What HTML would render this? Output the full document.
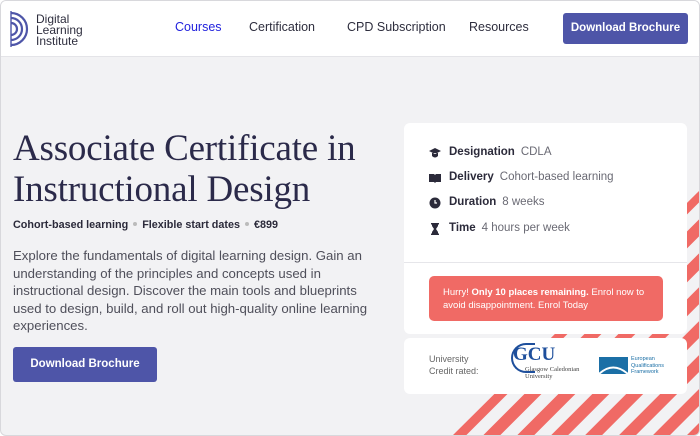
<!DOCTYPE html>
<html><head><meta charset="utf-8"><style>
*{margin:0;padding:0;box-sizing:border-box}
body{width:700px;height:436px;overflow:hidden;font-family:"Liberation Sans",sans-serif;background:#fff}
.page{position:absolute;left:0;top:0;width:700px;height:436px;border:1px solid #d8d8dc;border-radius:6px;overflow:hidden;background:#f2f2f4}
.hdr{position:absolute;left:0;top:0;width:700px;height:56px;background:#fff;border-bottom:1px solid #e4e4e8}
.nav{position:absolute;top:19px;font-size:12.5px;color:#2e2e3e}
.btn{position:absolute;background:#4e55a8;color:#fff;font-size:11.5px;font-weight:bold;text-align:center;border-radius:3px}
h1{position:absolute;left:12px;top:127px;font-family:"Liberation Serif",serif;font-weight:normal;font-size:37px;line-height:41px;color:#2b2a4a;letter-spacing:-0.2px}
.meta{position:absolute;left:12px;top:218px;font-size:10.8px;font-weight:bold;color:#2b2a3a}
.meta i{display:inline-block;width:4px;height:4px;border-radius:50%;background:#bbb;margin:0 5px 2px}
.desc{position:absolute;left:12px;top:246px;width:365px;font-size:13.2px;line-height:17.5px;color:#4f4f5a}
.card{position:absolute;background:#fff;border-radius:6px}
.row{position:absolute;left:25px;font-size:11.5px;color:#6a6a74}
.row b{color:#2b2a3a;margin-right:6px}
.row svg{position:absolute;left:0;top:1px}
.row span{margin-left:20px}
</style></head><body><div class="page">
<svg style="position:absolute;left:0;top:0" width="700" height="436">
<defs><clipPath id="c"><polygon points="700,188 700,436 450,436"/></clipPath>
<pattern id="p" width="24" height="24" patternUnits="userSpaceOnUse" patternTransform="rotate(45)"><rect width="12" height="24" fill="#f06a65"/></pattern></defs>
<rect x="0" y="0" width="700" height="436" fill="url(#p)" clip-path="url(#c)"/>
</svg>
<div class="hdr">
<svg style="position:absolute;left:8px;top:9px" width="26" height="38" viewBox="0 0 26 38" fill="none" stroke="#4e55a8" stroke-width="2.2">
<path d="M2 3a16 16 0 0 1 0 32"/><path d="M2 8a11 11 0 0 1 0 22"/><path d="M2 13a6 6 0 0 1 0 12"/><path d="M2 1v36" stroke-width="1.4"/></svg>
<div style="position:absolute;left:35px;top:13px;font-size:12px;line-height:11px;color:#2e2e3e">Digital<br>Learning<br>Institute</div>
<div class="nav" style="left:174px;color:#2222dd">Courses</div>
<div class="nav" style="left:248px">Certification</div>
<div class="nav" style="left:346px">CPD Subscription</div>
<div class="nav" style="left:468px">Resources</div>
<div class="btn" style="left:562px;top:12px;width:125px;height:31px;line-height:31px">Download Brochure</div>
</div>
<h1>Associate Certificate in<br>Instructional Design</h1>
<div class="meta">Cohort-based learning<i></i>Flexible start dates<i></i>€899</div>
<div class="desc">Explore the fundamentals of digital learning design. Gain an understanding of the principles and concepts used in instructional design. Discover the main tools and blueprints used to design, build, and roll out high-quality online learning experiences.</div>
<div class="btn" style="left:12px;top:346px;width:144px;height:35px;line-height:35px">Download Brochure</div>
<div class="card" style="left:403px;top:122px;width:283px;height:211px">
<div class="row" style="top:23px"><svg width="12" height="12" viewBox="0 0 12 12"><path d="M0 4l6-3 6 3-6 3z M3 6v3c2 2 4 2 6 0V6" fill="#2b2a3a"/></svg><span><b>Designation</b>CDLA</span></div>
<div class="row" style="top:48px"><svg width="12" height="12" viewBox="0 0 12 12"><path d="M0 2h5l1 1 1-1h5v8H7l-1 1-1-1H0z" fill="#2b2a3a"/></svg><span><b>Delivery</b>Cohort-based learning</span></div>
<div class="row" style="top:73px"><svg width="12" height="12" viewBox="0 0 12 12"><circle cx="6" cy="6" r="5.5" fill="#2b2a3a"/><path d="M6 3v3h2" stroke="#fff" stroke-width="1.2" fill="none"/></svg><span><b>Duration</b>8 weeks</span></div>
<div class="row" style="top:99px"><svg width="12" height="12" viewBox="0 0 12 12"><path d="M2 0h8v1.5H9v1.5L7 6l2 3v1.5h1V12H2v-1.5h1V9l2-3-2-3V1.5H2z" fill="#2b2a3a"/></svg><span><b>Time</b>4 hours per week</span></div>
<div style="position:absolute;left:0;top:139px;width:283px;height:1px;background:#e6e6ea"></div>
<div style="position:absolute;left:25px;top:153px;width:234px;height:45px;background:#f06a65;border-radius:5px;color:#fff;font-size:9.5px;line-height:13px;padding:10px 14px">Hurry! <b>Only 10 places remaining.</b> Enrol now to avoid disappointment. Enrol Today</div>
</div>
<div class="card" style="left:403px;top:337px;width:283px;height:56px">
<div style="position:absolute;left:25px;top:15px;font-size:9px;line-height:12px;color:#666">University<br>Credit rated:</div>
<div style="position:absolute;left:109px;top:6px;font-family:'Liberation Serif',serif;color:#1e4f9c;font-size:19px;font-weight:bold">GCU</div>
<div style="position:absolute;left:107px;top:5px;width:24px;height:30px;border:2px solid #1e4f9c;border-right:none;border-radius:15px 0 0 15px"></div>
<div style="position:absolute;left:121px;top:28px;font-family:'Liberation Serif',serif;font-size:6.5px;line-height:7px;color:#444">Glasgow Caledonian<br>University</div>
<div style="position:absolute;left:195px;top:19px;width:29px;height:17px;background:#1b6fa6"></div>
<svg style="position:absolute;left:195px;top:23px" width="29" height="13"><path d="M0 13Q14 0 29 13" fill="none" stroke="#fff" stroke-width="2"/></svg>
<div style="position:absolute;left:227px;top:18px;font-size:5.5px;line-height:6.5px;color:#1b6fa6">European<br>Qualifications<br>Framework</div>
</div>
</div></body></html>
